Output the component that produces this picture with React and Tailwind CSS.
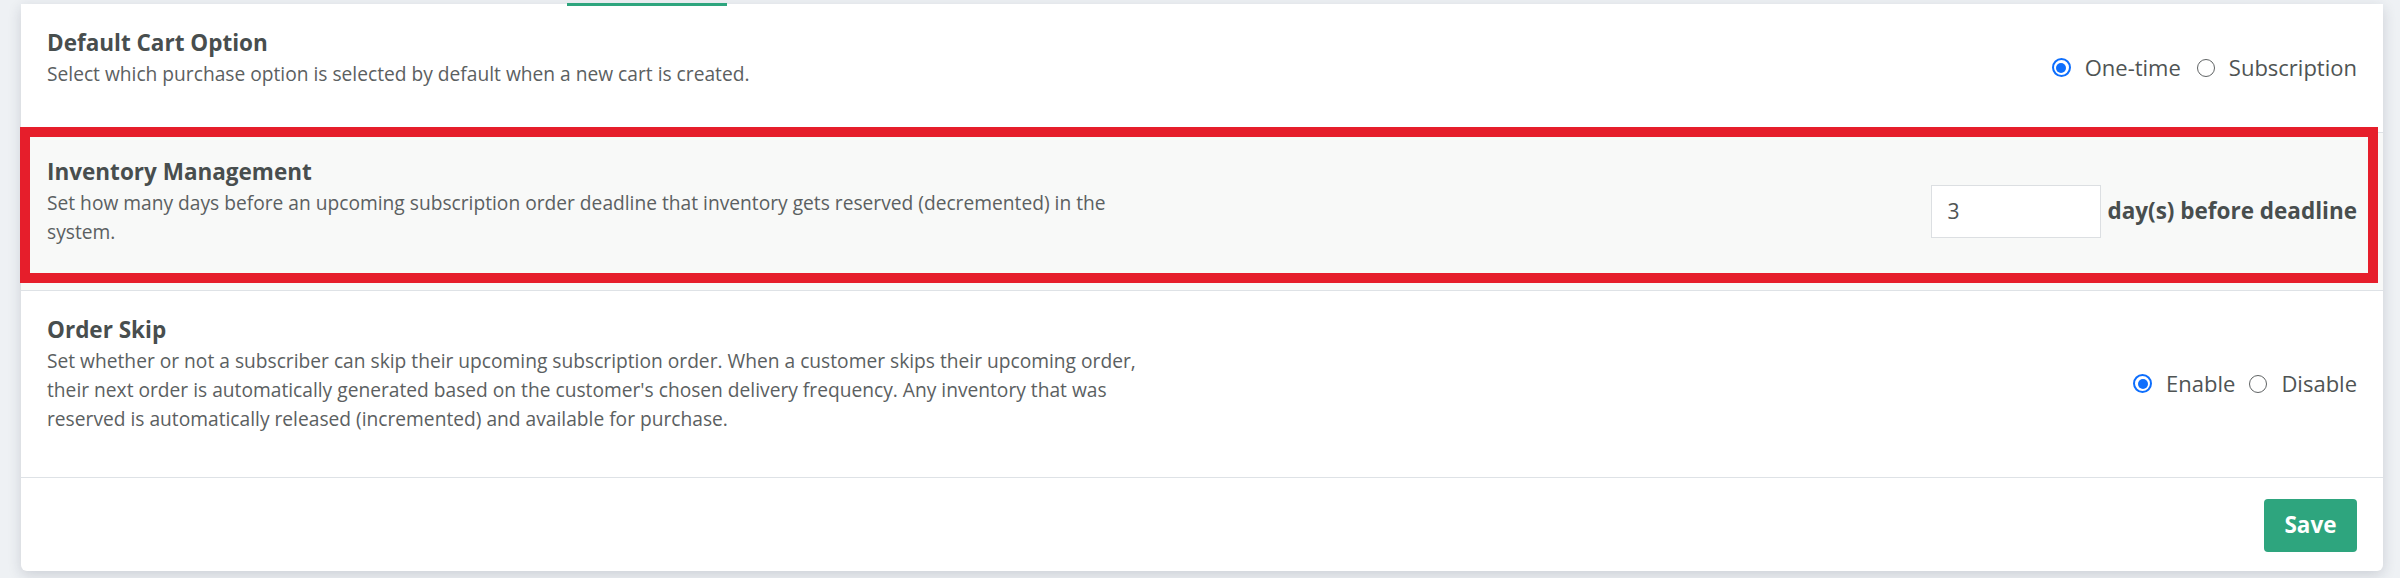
import React, { useState } from "react";

const FONT = { fontFamily: '"Open Sans", "Noto Sans", "Liberation Sans", sans-serif' };

function Radio({ checked, label, onClick }) {
  return (
    <label onClick={onClick} className="flex items-center cursor-pointer">
      {checked ? (
        <span className="w-[19px] h-[19px] rounded-full border-[2px] border-[#0d6efd] bg-white flex items-center justify-center">
          <span className="w-[10px] h-[10px] rounded-full bg-[#0d6efd]" />
        </span>
      ) : (
        <span className="w-[18px] h-[18px] rounded-full border-[1.5px] border-[#5f6364] bg-white" />
      )}
      <span className="ml-[14px] text-[22px] leading-[1.5] text-[#4f5454]">{label}</span>
    </label>
  );
}

function SettingRow({ title, desc, children, className = "" }) {
  return (
    <div className={`relative flex items-center justify-between px-[26px] pt-[22px] pb-[22px] border-b border-[#dee2e6] ${className}`}>
      <div className="max-w-[1110px]">
        <div className="text-[22.5px] leading-[33.4px] font-bold text-[#484e4e]">{title}</div>
        <p className="text-[19.2px] leading-[29.25px] text-[#5b6061] mb-[21px]">{desc}</p>
      </div>
      {children}
    </div>
  );
}

export default function App() {
  const [cart, setCart] = useState("one");
  const [skip, setSkip] = useState("enable");
  const [days, setDays] = useState("3");

  return (
    <div className="min-h-[578px] w-full bg-[#eef1f4] pt-[4px]" style={FONT}>
      <div className="relative ml-[21px] w-[2362px] bg-white rounded-b-[6px] shadow-[0_4px_14px_rgba(30,40,60,0.16)]">
        {/* active tab underline */}
        <div className="absolute top-[-1px] left-[546px] w-[160px] h-[3px] bg-[#2ea57e]" />

        <SettingRow
          title="Default Cart Option"
          desc="Select which purchase option is selected by default when a new cart is created."
        >
          <div className="flex items-center gap-[16px]">
            <Radio checked={cart === "one"} label="One-time" onClick={() => setCart("one")} />
            <Radio checked={cart === "sub"} label="Subscription" onClick={() => setCart("sub")} />
          </div>
        </SettingRow>

        <SettingRow
          className="bg-[#f8f9f8]"
          title="Inventory Management"
          desc="Set how many days before an upcoming subscription order deadline that inventory gets reserved (decremented) in the system."
        >
          <div className="flex items-center">
            <input
              value={days}
              onChange={(e) => setDays(e.target.value)}
              className="w-[170px] h-[53px] border border-[#dcdfe2] bg-white px-[15px] text-[21px] text-[#4f5454] outline-none"
            />
            <span className="ml-[6px] text-[22.5px] font-bold text-[#484e4e]">day(s) before deadline</span>
          </div>
          {/* highlight frame */}
          <div className="absolute left-[-1px] right-[5px] top-[-6px] bottom-[7px] border-[10px] border-[#e61e2b] pointer-events-none" />
        </SettingRow>

        <SettingRow
          title="Order Skip"
          desc="Set whether or not a subscriber can skip their upcoming subscription order. When a customer skips their upcoming order, their next order is automatically generated based on the customer's chosen delivery frequency. Any inventory that was reserved is automatically released (incremented) and available for purchase."
        >
          <div className="flex items-center gap-[14px]">
            <Radio checked={skip === "enable"} label="Enable" onClick={() => setSkip("enable")} />
            <Radio checked={skip === "disable"} label="Disable" onClick={() => setSkip("disable")} />
          </div>
        </SettingRow>

        <div className="flex justify-end px-[26px] pt-[21px] pb-[19px]">
          <button className="w-[93px] h-[53px] rounded-[4px] bg-[#2ea57e] text-white text-[22.5px] font-bold">
            Save
          </button>
        </div>
      </div>
    </div>
  );
}
